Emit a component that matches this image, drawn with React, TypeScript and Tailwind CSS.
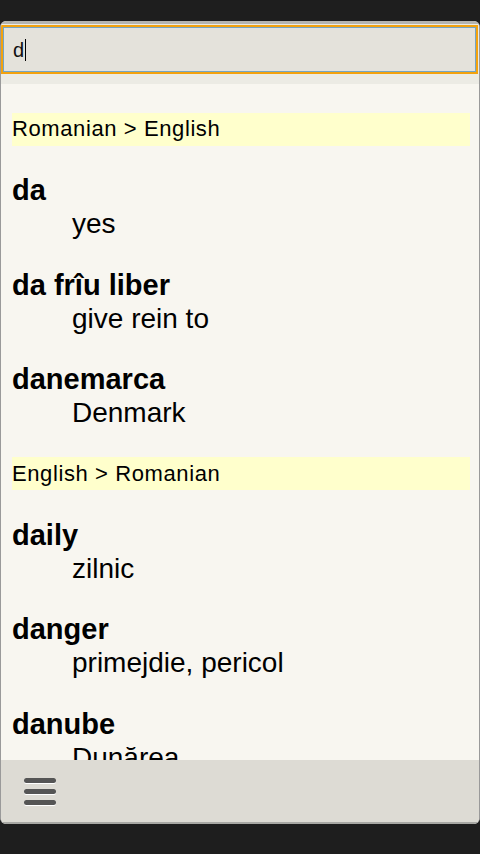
import React from 'react'

type Entry = { word: string; tr: string }

const sections: { title: string; entries: Entry[] }[] = [
  {
    title: 'Romanian > English',
    entries: [
      { word: 'da', tr: 'yes' },
      { word: 'da frîu liber', tr: 'give rein to' },
      { word: 'danemarca', tr: 'Denmark' },
    ],
  },
  {
    title: 'English > Romanian',
    entries: [
      { word: 'daily', tr: 'zilnic' },
      { word: 'danger', tr: 'primejdie, pericol' },
      { word: 'danube', tr: 'Dunărea' },
    ],
  },
]

function MenuIcon() {
  return (
    <div className="flex flex-col gap-[6px] w-[32px]">
      {[0, 1, 2].map((i) => (
        <div key={i} className="h-[5px] rounded-full bg-[#555] shadow-[0_1px_0_#fff]" />
      ))}
    </div>
  )
}

export default function App() {
  return (
    <div
      className="w-[480px] h-[854px] bg-[#1e1e1e] pt-[21px] pb-[30px] flex flex-col"
      style={{ fontFamily: '"Liberation Sans", Arial, sans-serif' }}
    >
      <div className="flex-1 flex flex-col rounded-[6px] overflow-hidden border-x border-[#9a9a9a] bg-[#f8f6f0] min-h-0">
        {/* top edge */}
        <div className="h-[3px] bg-[#b4b4b0] shrink-0" />

        {/* search box */}
        <div className="bg-[#ecebe4] pt-[1px] shrink-0">
          <div className="h-[49px] border-2 border-[#f2a20f] mr-[1px]">
            <div className="h-full border border-[#74a4c4] bg-[#e4e2db] flex items-center pl-[9px]">
              <span className="text-[20px] text-[#111] leading-none">d</span>
              <span className="w-[1px] h-[22px] bg-black ml-[1px]" />
            </div>
          </div>
          <div className="h-[10px]" />
        </div>

        {/* results */}
        <div className="flex-1 min-h-0 overflow-hidden pt-[28.5px] pl-[11px] pr-[9px] text-black">
          {sections.map((s, si) => (
            <div key={s.title} className={si > 0 ? 'mt-[28px]' : ''}>
              <div className="h-[33px] bg-[#ffffcc] flex items-center text-[22px] tracking-[0.6px] leading-none">
                {s.title}
              </div>
              {s.entries.map((e) => (
                <div key={e.word} className="mt-[28.5px]">
                  <div className="text-[29px] font-bold leading-[33px]">{e.word}</div>
                  <div className="text-[28px] leading-[33px] pl-[60px]">{e.tr}</div>
                </div>
              ))}
            </div>
          ))}
        </div>

        {/* toolbar */}
        <div className="h-[62px] bg-[#dddbd4] shrink-0 flex items-center pl-[23px]">
          <MenuIcon />
        </div>
        <div className="h-[2px] bg-[#a8a8a4] shrink-0" />
      </div>
    </div>
  )
}
